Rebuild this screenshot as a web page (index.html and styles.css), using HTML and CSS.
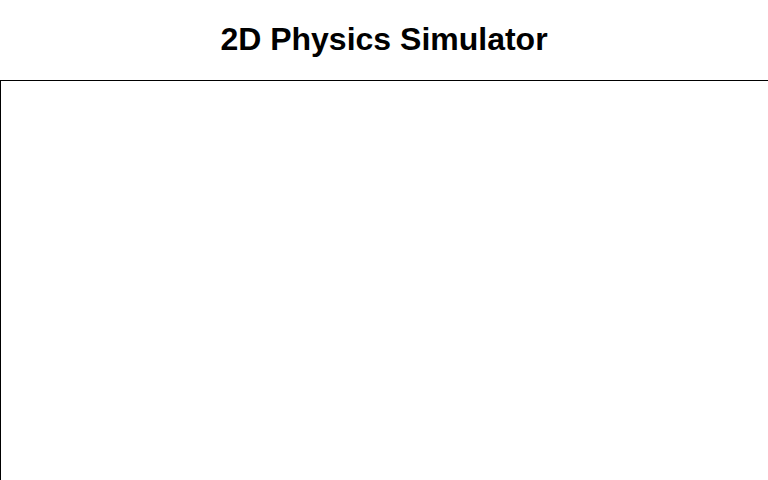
FILE: index.html
```html
<!DOCTYPE html>
<html lang="en">
<head>
<meta charset="utf-8">
<title>2D Physics Simulator</title>
<link rel="stylesheet" href="styles.css">
</head>
<body>
<h1 class="title">2D Physics Simulator</h1>
<canvas class="sim" width="800" height="600"></canvas>
</body>
</html>
```
FILE: styles.css
```css
html, body {
  margin: 0;
  padding: 0;
  background: #fff;
  font-family: "Liberation Sans", Arial, sans-serif;
}
.title {
  font-size: 32px;
  font-weight: bold;
  text-align: center;
  margin: 21.44px 0;
  color: #000;
}
.sim {
  display: block;
  border: 1px solid #000;
  background: #fff;
}
```
